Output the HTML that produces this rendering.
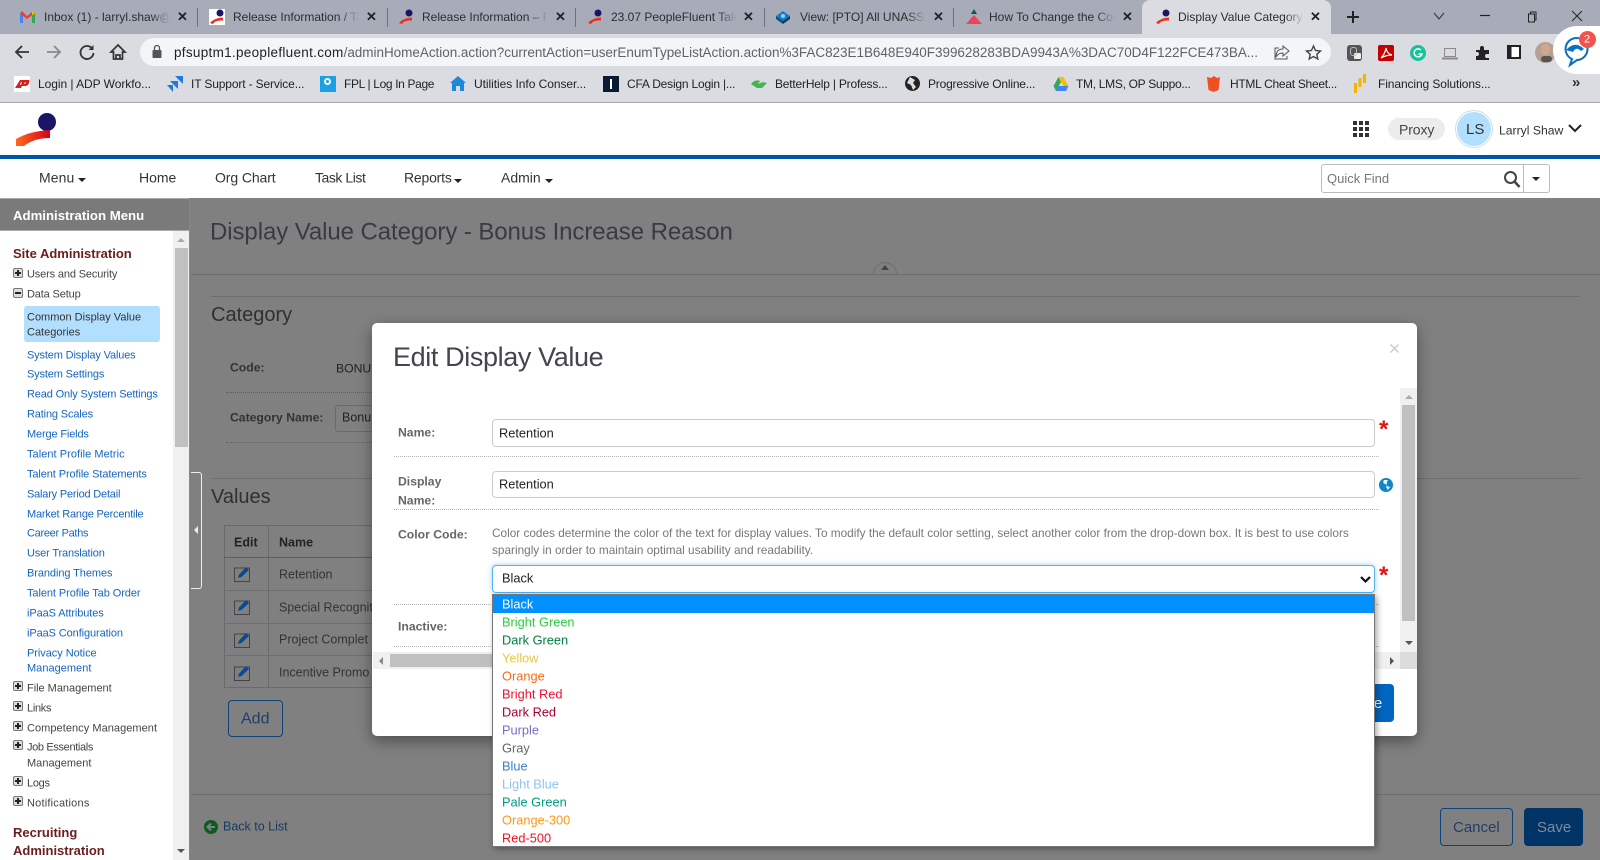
<!DOCTYPE html>
<html><head><meta charset="utf-8"><title>Display Value Category</title>
<style>
html,body{margin:0;padding:0;width:1600px;height:860px;overflow:hidden;background:#fff;font-family:"Liberation Sans",sans-serif;font-size:12px;color:#222}
.t{position:absolute;white-space:nowrap;transform:translateY(-50%);line-height:1.2}
.b{position:absolute;box-sizing:border-box}
svg{position:absolute;overflow:visible}
.tab{font-size:12px;color:#2c2c30;overflow:hidden}
.x{font-size:13px;color:#222;font-weight:bold}
.sep{position:absolute;width:1px;top:8px;height:19px;background:#6f727c}
.bm{font-size:12px;color:#222}
.nav{font-size:14px;color:#333}
.caret{position:absolute;width:0;height:0;border-left:4px solid transparent;border-right:4px solid transparent;border-top:4px solid #222}
.l{font-size:11px;letter-spacing:-.15px;color:#1565c0;left:27px;margin-top:1px}
.g{font-size:11px;letter-spacing:-.15px;color:#444;left:27px;margin-top:1px}
.bx{position:absolute;left:13px;width:10px;height:10px;box-sizing:border-box;border:1px solid #777;background:#ddd;border-radius:2px}
.bx:before{content:"";position:absolute;left:1px;right:1px;top:3px;height:2px;background:#222}
.bx.p:after{content:"";position:absolute;top:1px;bottom:1px;left:3px;width:2px;background:#222}
.dot{position:absolute;height:0;border-top:1px dotted #b5b5b5}
.dim{background:#333;position:absolute;height:1px}
.opt{font-size:12.8px;left:502px}
.lab{font-size:12.2px;font-weight:bold;color:#666;left:398px}
.row{position:absolute;left:224px;width:170px;height:1px;background:#5e5e5e}
.d{color:#333;font-size:13px}
</style></head><body>

<!-- tab strip -->
<div class="b" style="left:0;top:0;width:1600px;height:34px;background:#a8acb8"></div>
<div class="b" style="left:1142px;top:0;width:189px;height:34px;background:#dadce2;border-radius:8px 8px 0 0"></div>
<div class="b" style="left:0;top:34px;width:1600px;height:68px;background:#dadce2"></div>
<div class="b" style="left:0;top:102px;width:1600px;height:1px;background:#a9a9ab"></div>

<!-- tab favicons -->
<svg style="left:20px;top:11px" width="15" height="12" viewBox="0 0 15 12"><path d="M0 2v10h3V5l4 3 5-3.500V12h3V2L13 0 7 5 2 0z" fill="#ea4335"/><path d="M0 2v10h3V5z" fill="#4285f4"/><path d="M12 4.500V12h3V2z" fill="#34a853"/><path d="M13 0l2 2-3 2.500V1z" fill="#fbbc04"/></svg>
<div class="b" style="left:209px;top:9px;width:16px;height:16px;background:#fff"></div>
<svg style="left:209px;top:9px" width="16" height="16" viewBox="0 0 16 16"><circle cx="11" cy="4" r="3.500" fill="#1c1464"/><path d="M1 14 Q5 9 14 8.500 L14 11.500 Q6 11 4 15z" fill="#e8301c"/></svg>
<svg style="left:398px;top:9px" width="16" height="16" viewBox="0 0 16 16"><circle cx="11" cy="4" r="3.500" fill="#1c1464"/><path d="M1 14 Q5 9 14 8.500 L14 11.500 Q6 11 4 15z" fill="#e8301c"/></svg>
<svg style="left:587px;top:9px" width="16" height="16" viewBox="0 0 16 16"><circle cx="11" cy="4" r="3.500" fill="#1c1464"/><path d="M1 14 Q5 9 14 8.500 L14 11.500 Q6 11 4 15z" fill="#e8301c"/></svg>
<svg style="left:775px;top:9px" width="16" height="16" viewBox="0 0 16 16"><path d="M8 2l7 5-7 5-7-5z" fill="#1d7bc4"/><path d="M1 7l7 5v3L1 10z" fill="#0f4c81"/><path d="M15 7l-7 5v3l7-5z" fill="#0b3a66"/><circle cx="8" cy="7" r="2" fill="#7fd6f5"/></svg>
<svg style="left:966px;top:9px" width="16" height="16" viewBox="0 0 16 16"><path d="M8 0l3 5H5z" fill="#0e5a5a"/><path d="M8 6l8 9H0z" fill="#f0425c"/></svg>
<svg style="left:1155px;top:9px" width="16" height="16" viewBox="0 0 16 16"><circle cx="11" cy="4" r="3.500" fill="#1c1464"/><path d="M1 14 Q5 9 14 8.500 L14 11.500 Q6 11 4 15z" fill="#e8301c"/></svg>

<!-- tabs text -->
<div class="t tab" style="left:44px;top:17px;width:126px;-webkit-mask-image:linear-gradient(90deg,#000 85%,transparent)">Inbox (1) - larryl.shaw@peoplefluent</div>
<div class="t x" style="left:177px;top:17px">✕</div><div class="sep" style="left:197px"></div>
<div class="t tab" style="left:233px;top:17px;width:126px;-webkit-mask-image:linear-gradient(90deg,#000 85%,transparent)">Release Information / Talent Suite</div>
<div class="t x" style="left:366px;top:17px">✕</div><div class="sep" style="left:387px"></div>
<div class="t tab" style="left:422px;top:17px;width:126px;-webkit-mask-image:linear-gradient(90deg,#000 85%,transparent)">Release Information – PeopleFluent</div>
<div class="t x" style="left:555px;top:17px">✕</div><div class="sep" style="left:575px"></div>
<div class="t tab" style="left:611px;top:17px;width:126px;-webkit-mask-image:linear-gradient(90deg,#000 85%,transparent)">23.07 PeopleFluent Talent Suite</div>
<div class="t x" style="left:743px;top:17px">✕</div><div class="sep" style="left:764px"></div>
<div class="t tab" style="left:800px;top:17px;width:126px;-webkit-mask-image:linear-gradient(90deg,#000 85%,transparent)">View: [PTO] All UNASSIGNED</div>
<div class="t x" style="left:933px;top:17px">✕</div><div class="sep" style="left:953px"></div>
<div class="t tab" style="left:989px;top:17px;width:126px;-webkit-mask-image:linear-gradient(90deg,#000 85%,transparent)">How To Change the Color of</div>
<div class="t x" style="left:1122px;top:17px">✕</div>
<div class="t tab" style="left:1178px;top:17px;width:126px;-webkit-mask-image:linear-gradient(90deg,#000 85%,transparent)">Display Value Category - Bonus</div>
<div class="t x" style="left:1310px;top:17px">✕</div>

<!-- window controls -->
<svg style="left:1346px;top:10px" width="14" height="14"><path d="M7 1v12M1 7h12" stroke="#222" stroke-width="2"/></svg>
<svg style="left:1433px;top:11px" width="12" height="10"><path d="M1 2l5 6 5-6" stroke="#333" fill="none"/></svg>
<svg style="left:1480px;top:14px" width="11" height="4"><path d="M0 1.500h10" stroke="#222" stroke-width="1.200"/></svg>
<svg style="left:1526px;top:11px" width="11" height="12"><path d="M2.500 3h6v8h-6zM4.500 3V1h5.500v8H8.500" stroke="#222" fill="none"/></svg>
<svg style="left:1571px;top:10px" width="12" height="12"><path d="M1 1l10 10M11 1L1 11" stroke="#222"/></svg>

<!-- toolbar -->
<svg style="left:14px;top:44px" width="16" height="16"><path d="M15 8H2M8 2L2 8l6 6" stroke="#333" stroke-width="1.800" fill="none"/></svg>
<svg style="left:46px;top:44px" width="16" height="16"><path d="M1 8h13M8 2l6 6-6 6" stroke="#888" stroke-width="1.800" fill="none"/></svg>
<svg style="left:79px;top:44px" width="16" height="16"><path d="M13.500 5A6.500 6.500 0 1 0 14.500 9" stroke="#333" stroke-width="1.800" fill="none"/><path d="M14.500 1v5h-5z" fill="#333"/></svg>
<svg style="left:110px;top:44px" width="16" height="16"><path d="M8 1L1 8h2.500v7h9V8H15zM6 15v-4h4v4" stroke="#333" stroke-width="1.700" fill="none"/></svg>
<div class="b" style="left:140px;top:38px;width:1191px;height:28px;border-radius:14px;background:#f3f5f8"></div>
<svg style="left:152px;top:45px" width="10" height="14"><rect x="0.500" y="5" width="9" height="8" rx="1" fill="#555"/><path d="M2.500 5V3a2.500 2.500 0 0 1 5 0v2" stroke="#555" stroke-width="1.300" fill="none"/></svg>
<div class="t" style="left:174px;top:53px;font-size:13.500px;color:#5f6368;letter-spacing:-.03px"><span style="color:#222;letter-spacing:.3px">pfsuptm1.peoplefluent.com</span>/adminHomeAction.action?currentAction=userEnumTypeListAction.action%3FAC823E1B648E940F399628283BDA9943A%3DAC70D4F122FCE473BA...</div>
<svg style="left:1274px;top:45px" width="16" height="15"><path d="M9 1l6 5-6 5V8Q4 8 2 12 2 4 9 4zM5 3H1v11h12v-3" stroke="#555" fill="none"/></svg>
<svg style="left:1306px;top:45px" width="15" height="15"><path d="M7.500 1l2 4.500 5 .5-3.700 3.300 1 4.700-4.300-2.500L3.200 14l1-4.700L.5 6l5-.5z" stroke="#444" stroke-width="1.400" fill="none"/></svg>
<!-- extensions -->
<div class="b" style="left:1347px;top:45px;width:15px;height:16px;border-radius:3px;background:#555"></div>
<div class="b" style="left:1354px;top:53px;width:7px;height:6px;background:#eee;border-radius:1px"></div>
<div class="b" style="left:1350px;top:47px;width:7px;height:9px;border:1px solid #bbb;border-radius:3px"></div>
<div class="b" style="left:1378px;top:45px;width:16px;height:16px;border-radius:2px;background:#c40000"></div>
<svg style="left:1378px;top:45px" width="16" height="16"><path d="M3 13Q7 9 8 3q1 6 6 7-6 0-11 3z" stroke="#fff" stroke-width="1.200" fill="none"/></svg>
<div class="b" style="left:1410px;top:45px;width:16px;height:16px;border-radius:50%;background:#15c39a"></div>
<svg style="left:1410px;top:45px" width="16" height="16"><path d="M11 5A4 4 0 1 0 12 9H8.500" stroke="#fff" stroke-width="1.500" fill="none"/></svg>
<svg style="left:1442px;top:47px" width="16" height="14"><rect x="2.500" y="1.500" width="11" height="8" fill="none" stroke="#8a8a8a"/><path d="M0 11.500h16" stroke="#8a8a8a" stroke-width="2"/></svg>
<svg style="left:1475px;top:45px" width="16" height="16"><path d="M1 5h4V3a2 2 0 0 1 4 0v2h5v4h-2a2 2 0 0 0 0 4h2v2H1v-4h1a2 2 0 0 0 0-4H1z" fill="#222"/></svg>
<svg style="left:1507px;top:45px" width="14" height="14"><rect x="1" y="1" width="12" height="12" fill="#fff" stroke="#222" stroke-width="2"/><rect x="1" y="1" width="3.500" height="12" fill="#222"/></svg>
<div class="b" style="left:1535px;top:42px;width:21px;height:21px;border-radius:50%;background:#b8a090"></div>
<div class="b" style="left:1541px;top:44px;width:9px;height:11px;border-radius:50%;background:#d0a890"></div>
<div class="b" style="left:1541px;top:56px;width:11px;height:6px;border-radius:3px;background:#555"></div>
<div class="b" style="left:1553px;top:26px;width:60px;height:48px;border-radius:24px 0 0 24px;background:#fff"></div>
<svg style="left:1563px;top:37px" width="26" height="30"><path d="M13 1a11 11 0 0 0-4 21l-2 6 7-5a11 11 0 0 0-1-22z" stroke="#0b6fc2" stroke-width="2" fill="none"/><path d="M3 13Q12 3 21 12l-3 2q-5-5-8 1z" fill="#0b6fc2"/></svg>
<div class="b" style="left:1579px;top:31px;width:17px;height:17px;border-radius:50%;background:#f4524d"></div>
<div class="t" style="left:1584px;top:40px;color:#fff;font-size:11px">2</div>

<!-- bookmarks -->
<div class="b" style="left:14px;top:76px;width:16px;height:16px;background:#fff"></div>
<svg style="left:14px;top:76px" width="16" height="16"><path d="M1 12L6 4h9q1 0 0 3t-4 3H8l-1 2z" fill="#d8201a"/><path d="M6 9h1l1-3h-1zM11 6h1l-1 2h-1z" fill="#fff"/></svg>
<svg style="left:167px;top:76px" width="16" height="16"><path d="M8 0h8v8zM3 5h8v8zM0 9h6v7z" fill="#1f7ae0"/></svg>
<div class="b" style="left:320px;top:76px;width:16px;height:16px;background:#1aa0e6"></div><div class="b" style="left:324px;top:78px;width:7px;height:7px;border:2px solid #fff;border-radius:50%"></div>
<svg style="left:450px;top:75px" width="16" height="17"><path d="M8 1L0 8h2v8h4v-5h4v5h4V8h2z" fill="#1e88d8"/></svg>
<div class="b" style="left:603px;top:76px;width:16px;height:16px;background:#0b1a33"></div><div class="b" style="left:610px;top:79px;width:2px;height:10px;background:#fff"></div>
<svg style="left:751px;top:79px" width="16" height="10"><path d="M0 5Q4 0 9 2L7 5 12 3l4 1-5 5H6z" fill="#46b450"/></svg>
<div class="b" style="left:905px;top:76px;width:15px;height:15px;border-radius:50%;background:#222"></div>
<svg style="left:905px;top:76px" width="15" height="15"><path d="M5 1l5 3-2 3 3 4-3 3-2-5-4-2z" fill="#ddd"/></svg>
<svg style="left:1053px;top:77px" width="16" height="14"><path d="M5.500 0h5l5 9h-5z" fill="#fbbc04"/><path d="M5.500 0l-5 9 2.500 5 5-9z" fill="#34a853"/><path d="M3 14h10l2.500-5H5.500z" fill="#4285f4"/></svg>
<svg style="left:1206px;top:75px" width="15" height="17"><path d="M1 2l1.500 13 5 2 5-2L14 2l-3 1-3-2-3 2z" fill="#f0501e"/></svg>
<svg style="left:1354px;top:74px" width="13" height="19"><rect x="9" y="0" width="3" height="9" fill="#f4b400"/><rect x="4.500" y="4" width="3" height="9" fill="#f4b400"/><rect x="0" y="9" width="3" height="10" fill="#f4b400"/></svg>
<div class="t bm" style="left:38px;top:84px;letter-spacing:-.05px">Login | ADP Workfo...</div>
<div class="t bm" style="left:191px;top:84px;letter-spacing:-.14px">IT Support - Service...</div>
<div class="t bm" style="left:344px;top:84px;letter-spacing:-.35px">FPL | Log In Page</div>
<div class="t bm" style="left:474px;top:84px;letter-spacing:-.05px">Utilities Info Conser...</div>
<div class="t bm" style="left:627px;top:84px;letter-spacing:-.2px">CFA Design Login |...</div>
<div class="t bm" style="left:775px;top:84px;letter-spacing:-.2px">BetterHelp | Profess...</div>
<div class="t bm" style="left:928px;top:84px;letter-spacing:-.2px">Progressive Online...</div>
<div class="t bm" style="left:1076px;top:84px;letter-spacing:-.3px">TM, LMS, OP Suppo...</div>
<div class="t bm" style="left:1230px;top:84px;letter-spacing:-.28px">HTML Cheat Sheet...</div>
<div class="t bm" style="left:1378px;top:84px;letter-spacing:-.1px">Financing Solutions...</div>
<div class="t" style="left:1572px;top:83px;font-size:15px;font-weight:bold;color:#333">»</div>

<!-- app header -->
<svg style="left:0;top:0" width="80" height="150"><defs><linearGradient id="sw" x1="0" x2="1"><stop offset="0" stop-color="#ff6a1c"/><stop offset="1" stop-color="#d4001c"/></linearGradient></defs><circle cx="47" cy="122" r="9" fill="#1c1464"/><path d="M16 139Q30 131 50 130L50 138Q34 138 24 146H16z" fill="url(#sw)"/></svg>
<div class="b" style="left:0;top:155px;width:1600px;height:4px;background:#0054a6"></div>
<svg style="left:1353px;top:121px" width="16" height="16"><path d="M0 0h4v4H0zM6 0h4v4H6zM12 0h4v4h-4zM0 6h4v4H0zM6 6h4v4H6zM12 6h4v4h-4zM0 12h4v4H0zM6 12h4v4H6zM12 12h4v4h-4z" fill="#333"/></svg>
<div class="b" style="left:1388px;top:118px;width:57px;height:22px;border-radius:11px;background:#ececec"></div>
<div class="t" style="left:1399px;top:130px;font-size:14px;color:#444;letter-spacing:-.1px">Proxy</div>
<div class="b" style="left:1455px;top:110px;width:38px;height:38px;border-radius:50%;border:1px solid #cfdde6;background:#fff"></div>
<div class="b" style="left:1457px;top:112px;width:34px;height:34px;border-radius:50%;background:#b3dfff"></div>
<div class="t" style="left:1466px;top:130px;font-size:15px;color:#333">LS</div>
<div class="t" style="left:1499px;top:131px;font-size:12.200px;color:#333">Larryl Shaw</div>
<svg style="left:1568px;top:124px" width="14" height="10"><path d="M1 1l6 6 6-6" stroke="#222" stroke-width="2" fill="none"/></svg>

<!-- nav -->
<div class="t nav" style="left:39px;top:178px;letter-spacing:.1px">Menu</div><div class="caret" style="left:78px;top:178px"></div>
<div class="t nav" style="left:139px;top:178px">Home</div>
<div class="t nav" style="left:215px;top:178px;letter-spacing:-.1px">Org Chart</div>
<div class="t nav" style="left:315px;top:178px;letter-spacing:-.45px">Task List</div>
<div class="t nav" style="left:404px;top:178px;letter-spacing:-.2px">Reports</div><div class="caret" style="left:454px;top:179px"></div>
<div class="t nav" style="left:501px;top:178px">Admin</div><div class="caret" style="left:545px;top:179px"></div>
<div class="b" style="left:1321px;top:164px;width:229px;height:29px;border:1px solid #bbb;border-radius:3px;background:#fff"></div>
<div class="b" style="left:1523px;top:164px;width:1px;height:29px;background:#bbb"></div>
<div class="t" style="left:1327px;top:179px;font-size:13px;color:#777">Quick Find</div>
<svg style="left:1503px;top:170px" width="18" height="18"><circle cx="7.500" cy="7.500" r="5.500" stroke="#444" stroke-width="2" fill="none"/><path d="M11.500 11.500l5 5.500" stroke="#444" stroke-width="2.500"/></svg>
<div class="caret" style="left:1532px;top:177px"></div>

<!-- backdrop -->
<div class="b" style="left:0;top:198px;width:1600px;height:662px;background:#808080"></div>
<!-- sidebar -->
<div class="b" style="left:0;top:198px;width:190px;height:662px;background:#fff;border-right:1px solid #888"></div>
<div class="b" style="left:0;top:198px;width:189px;height:33px;background:#7a7a7a;border-top:1px solid #aaa;border-bottom:1px solid #aaa"></div>
<div class="t" style="left:13px;top:216px;font-size:13.200px;font-weight:bold;color:#fff">Administration Menu</div>
<div class="b" style="left:173px;top:231px;width:16px;height:629px;background:#f0f0f0"></div>
<div class="b" style="left:175px;top:248px;width:13px;height:199px;background:#c0c0c0"></div>
<div style="position:absolute;left:177px;top:238px;border-left:4px solid transparent;border-right:4px solid transparent;border-bottom:4px solid #aaa"></div>
<div style="position:absolute;left:177px;top:849px;border-left:4px solid transparent;border-right:4px solid transparent;border-top:4px solid #555"></div>

<div class="t" style="left:13px;top:254px;font-size:13px;font-weight:bold;color:#6b1d1d">Site Administration</div>
<div class="bx p" style="top:268px"></div><div class="t g" style="top:274px">Users and Security</div>
<div class="bx" style="top:288px"></div><div class="t g" style="top:294px">Data Setup</div>
<div class="b" style="left:24px;top:306px;width:136px;height:36px;background:#b3dfff;border-radius:3px"></div>
<div class="t" style="left:27px;top:318px;font-size:11px;color:#333">Common Display Value</div>
<div class="t" style="left:27px;top:333px;font-size:11px;color:#333">Categories</div>
<div class="t l" style="top:355px">System Display Values</div>
<div class="t l" style="top:374px">System Settings</div>
<div class="t l" style="top:394px">Read Only System Settings</div>
<div class="t l" style="top:414px">Rating Scales</div>
<div class="t l" style="top:434px">Merge Fields</div>
<div class="t l" style="top:454px;letter-spacing:.05px">Talent Profile Metric</div>
<div class="t l" style="top:474px;letter-spacing:-.1px">Talent Profile Statements</div>
<div class="t l" style="top:494px;letter-spacing:-.2px">Salary Period Detail</div>
<div class="t l" style="top:514px;letter-spacing:-.2px">Market Range Percentile</div>
<div class="t l" style="top:533px;letter-spacing:-.3px">Career Paths</div>
<div class="t l" style="top:553px">User Translation</div>
<div class="t l" style="top:573px;letter-spacing:-.08px">Branding Themes</div>
<div class="t l" style="top:593px;letter-spacing:-.08px">Talent Profile Tab Order</div>
<div class="t l" style="top:613px;letter-spacing:-.1px">iPaaS Attributes</div>
<div class="t l" style="top:633px;letter-spacing:-.1px">iPaaS Configuration</div>
<div class="t l" style="top:653px;letter-spacing:-.05px">Privacy Notice</div>
<div class="t l" style="top:668px;letter-spacing:.02px">Management</div>
<div class="bx p" style="top:681px"></div><div class="t g" style="top:688px;letter-spacing:-.02px">File Management</div>
<div class="bx p" style="top:701px"></div><div class="t g" style="top:708px;letter-spacing:-.3px">Links</div>
<div class="bx p" style="top:721px"></div><div class="t g" style="top:728px;letter-spacing:.05px">Competency Management</div>
<div class="bx p" style="top:740px"></div><div class="t g" style="top:747px;letter-spacing:-.35px">Job Essentials</div>
<div class="t g" style="top:763px;letter-spacing:.02px">Management</div>
<div class="bx p" style="top:776px"></div><div class="t g" style="top:783px;letter-spacing:-.3px">Logs</div>
<div class="bx p" style="top:796px"></div><div class="t g" style="top:803px;letter-spacing:.2px">Notifications</div>
<div class="t" style="left:13px;top:833px;font-size:13px;font-weight:bold;color:#6b1d1d">Recruiting</div>
<div class="t" style="left:13px;top:851px;font-size:13px;font-weight:bold;color:#6b1d1d">Administration</div>

<!-- dimmed page -->
<div class="t" style="left:210px;top:233px;font-size:24px;letter-spacing:-.08px;color:#3a3a42">Display Value Category - Bonus Increase Reason</div>
<div class="dim" style="left:191px;top:274px;width:1409px;background:#6e6e6e"></div>
<div class="b" style="left:873px;top:262px;width:24px;height:12px;background:#808080;border:1px solid #6e6e6e;border-bottom:0;border-radius:12px 12px 0 0"></div>
<div style="position:absolute;left:881px;top:265px;border-left:4px solid transparent;border-right:4px solid transparent;border-bottom:5px solid #444"></div>
<div class="dim" style="left:211px;top:296px;width:1369px;background:#6e6e6e"></div>
<div class="t" style="left:211px;top:315px;font-size:20px;color:#303030">Category</div>
<div class="t" style="left:230px;top:368px;font-size:12.200px;font-weight:bold;color:#333">Code:</div>
<div class="t" style="left:336px;top:369px;font-size:12.200px;color:#222">BONU</div>
<div class="dot" style="left:226px;top:392px;width:150px;border-color:#5e5e5e"></div>
<div class="t" style="left:230px;top:418px;font-size:12.200px;font-weight:bold;color:#333">Category Name:</div>
<div class="b" style="left:335px;top:405px;width:60px;height:27px;border:1px solid #6a6a6a;border-radius:3px"></div>
<div class="t" style="left:342px;top:418px;font-size:12.500px;color:#222">Bonu</div>
<div class="dot" style="left:226px;top:442px;width:150px;border-color:#5e5e5e"></div>
<div class="dim" style="left:211px;top:478px;width:1369px;background:#6e6e6e"></div>
<div class="t" style="left:211px;top:497px;font-size:20px;color:#303030">Values</div>
<!-- table -->
<div class="b" style="left:224px;top:525px;width:160px;height:163px;border:1px solid #6a6a6a;border-right:0"></div>
<div class="b" style="left:268px;top:525px;width:1px;height:163px;background:#6a6a6a"></div>
<div class="row" style="top:557px"></div><div class="row" style="top:590px;background:#6e6e6e"></div><div class="row" style="top:623px;background:#6e6e6e"></div><div class="row" style="top:655px;background:#6e6e6e"></div>
<div class="t" style="left:234px;top:543px;font-size:12.500px;font-weight:bold;color:#222">Edit</div>
<div class="t" style="left:279px;top:543px;font-size:12.500px;font-weight:bold;color:#222">Name</div>
<div class="t d" style="left:279px;top:575px;font-size:12.500px">Retention</div>
<div class="t d" style="left:279px;top:608px;font-size:12.500px">Special Recognit</div>
<div class="t d" style="left:279px;top:640px;font-size:12.500px">Project Complet</div>
<div class="t d" style="left:279px;top:673px;font-size:12.500px">Incentive Promo</div>
<svg style="left:234px;top:565px" width="17" height="17"><rect x="0.500" y="3" width="15" height="13.500" fill="none" stroke="#444"/><path d="M4 13l1-3.500 7-7.500 3 3-7.500 7z" fill="#0a4a94"/></svg>
<svg style="left:234px;top:598px" width="17" height="17"><rect x="0.500" y="3" width="15" height="13.500" fill="none" stroke="#444"/><path d="M4 13l1-3.500 7-7.500 3 3-7.500 7z" fill="#0a4a94"/></svg>
<svg style="left:234px;top:631px" width="17" height="17"><rect x="0.500" y="3" width="15" height="13.500" fill="none" stroke="#444"/><path d="M4 13l1-3.500 7-7.500 3 3-7.500 7z" fill="#0a4a94"/></svg>
<svg style="left:234px;top:664px" width="17" height="17"><rect x="0.500" y="3" width="15" height="13.500" fill="none" stroke="#444"/><path d="M4 13l1-3.500 7-7.500 3 3-7.500 7z" fill="#0a4a94"/></svg>
<div class="b" style="left:228px;top:700px;width:55px;height:37px;border:1px solid #0f4279;border-radius:4px"></div>
<div class="t" style="left:241px;top:719px;font-size:16px;color:#1f3f6a">Add</div>
<div class="b" style="left:191px;top:472px;width:11px;height:117px;border:1px solid #eee;border-left:0;border-radius:0 3px 3px 0"></div>
<div style="position:absolute;left:194px;top:526px;border-top:4px solid transparent;border-bottom:4px solid transparent;border-right:4px solid #eee"></div>
<div class="dim" style="left:191px;top:794px;width:1409px;background:#6e6e6e"></div>
<svg style="left:204px;top:820px" width="14" height="14"><circle cx="7" cy="7" r="7" fill="#0d5a22"/><path d="M11 7H4M7 3.500L3.500 7 7 10.500" stroke="#808080" stroke-width="2" fill="none"/></svg>
<div class="t" style="left:223px;top:827px;font-size:12.500px;color:#143d66">Back to List</div>
<div class="b" style="left:1440px;top:808px;width:73px;height:38px;border:1px solid #0f4279;border-radius:4px"></div>
<div class="t" style="left:1453px;top:828px;font-size:15px;color:#1f3f6a">Cancel</div>
<div class="b" style="left:1524px;top:808px;width:59px;height:38px;background:#003366;border-radius:4px"></div>
<div class="t" style="left:1537px;top:828px;font-size:15px;color:#7f8a98">Save</div>

<!-- modal -->
<div class="b" style="left:372px;top:323px;width:1045px;height:413px;background:#fff;border-radius:5px;box-shadow:0 5px 15px rgba(0,0,0,.4)"></div>
<div class="t" style="left:393px;top:357px;font-size:27px;letter-spacing:-.38px;color:#44444c">Edit Display Value</div>
<svg style="left:1390px;top:344px" width="9" height="9"><path d="M.5.5l8 8M8.500.5l-8 8" stroke="#ccc" stroke-width="1.500"/></svg>

<div class="t lab" style="top:433px">Name:</div>
<div class="b" style="left:492px;top:419px;width:883px;height:28px;border:1px solid #ccc;border-radius:4px;background:#fff"></div>
<div class="t" style="left:499px;top:433px;font-size:12.800px;color:#222">Retention</div>
<div class="dot" style="left:394px;top:456px;width:985px"></div>
<div class="t" style="left:1379px;top:430px;color:#e81010;font-size:24px;line-height:1;font-weight:bold">*</div>

<div class="t lab" style="top:482px">Display</div>
<div class="t lab" style="top:501px">Name:</div>
<div class="b" style="left:492px;top:471px;width:883px;height:27px;border:1px solid #ccc;border-radius:4px;background:#fff"></div>
<div class="t" style="left:499px;top:484px;font-size:12.800px;color:#222">Retention</div>
<div class="dot" style="left:394px;top:509px;width:985px"></div>
<svg style="left:1379px;top:478px" width="14" height="14"><circle cx="7" cy="7" r="7" fill="#0f86c9"/><path d="M5 2Q3 5 6 6t1 3l2 3 2-3-3-1q-1-3 1-6z" fill="#e8f4fb"/></svg>

<div class="t lab" style="top:535px">Color Code:</div>
<div class="t" style="left:492px;top:533px;font-size:11.800px;color:#777">Color codes determine the color of the text for display values. To modify the default color setting, select another color from the drop-down box. It is best to use colors</div>
<div class="t" style="left:492px;top:550px;font-size:11.800px;color:#777">sparingly in order to maintain optimal usability and readability.</div>
<div class="b" style="left:492px;top:565px;width:883px;height:28px;border:1px solid #55b4ea;border-radius:4px;background:#fff;box-shadow:0 0 6px rgba(102,175,233,.6)"></div>
<div class="t" style="left:502px;top:578px;font-size:12.800px;color:#222">Black</div>
<svg style="left:1360px;top:576px" width="11" height="8"><path d="M1 1l4.500 4.500L10 1" stroke="#111" stroke-width="2.200" fill="none"/></svg>
<div class="t" style="left:1379px;top:576px;color:#e81010;font-size:24px;line-height:1;font-weight:bold">*</div>
<div class="dot" style="left:394px;top:604px;width:985px"></div>
<div class="t lab" style="top:627px">Inactive:</div>
<div class="dot" style="left:394px;top:646px;width:985px"></div>

<!-- modal scrollbars -->
<div class="b" style="left:1400px;top:388px;width:17px;height:264px;background:#f0f0f0"></div>
<div class="b" style="left:1402px;top:405px;width:13px;height:216px;background:#c0c0c0"></div>
<div style="position:absolute;left:1405px;top:395px;border-left:4px solid transparent;border-right:4px solid transparent;border-bottom:4px solid #aaa"></div>
<div style="position:absolute;left:1405px;top:641px;border-left:4px solid transparent;border-right:4px solid transparent;border-top:4px solid #555"></div>
<div class="b" style="left:373px;top:652px;width:1027px;height:17px;background:#f0f0f0"></div>
<div class="b" style="left:390px;top:654px;width:960px;height:13px;background:#c0c0c0"></div>
<div class="b" style="left:1400px;top:652px;width:17px;height:17px;background:#dcdcdc"></div>
<div style="position:absolute;left:379px;top:657px;border-top:4px solid transparent;border-bottom:4px solid transparent;border-right:4px solid #888"></div>
<div style="position:absolute;left:1390px;top:657px;border-top:4px solid transparent;border-bottom:4px solid transparent;border-left:4px solid #555"></div>
<div class="b" style="left:1340px;top:684px;width:54px;height:38px;background:#0066c0;border-radius:4px"></div>
<div class="t" style="left:1348px;top:704px;font-size:15px;color:#fff">Save</div>

<!-- dropdown -->
<div class="b" style="left:492px;top:594px;width:883px;height:253px;background:#fff;border:1px solid #777;box-shadow:2px 2px 6px rgba(0,0,0,.35)"></div>
<div class="b" style="left:493px;top:595px;width:881px;height:18px;background:#0090ff"></div>
<div class="t opt" style="top:604px;color:#fff">Black</div>
<div class="t opt" style="top:622px;color:#2ecc40">Bright Green</div>
<div class="t opt" style="top:640px;color:#008040">Dark Green</div>
<div class="t opt" style="top:658px;color:#e8c840">Yellow</div>
<div class="t opt" style="top:676px;color:#ff6a13">Orange</div>
<div class="t opt" style="top:694px;color:#f0102c">Bright Red</div>
<div class="t opt" style="top:712px;color:#a80030">Dark Red</div>
<div class="t opt" style="top:730px;color:#7e6bc4">Purple</div>
<div class="t opt" style="top:748px;color:#666">Gray</div>
<div class="t opt" style="top:766px;color:#3d7fc0">Blue</div>
<div class="t opt" style="top:784px;color:#90c4ee">Light Blue</div>
<div class="t opt" style="top:802px;color:#009a80">Pale Green</div>
<div class="t opt" style="top:820px;color:#ff9810">Orange-300</div>
<div class="t opt" style="top:838px;color:#f01020">Red-500</div>
</body></html>
